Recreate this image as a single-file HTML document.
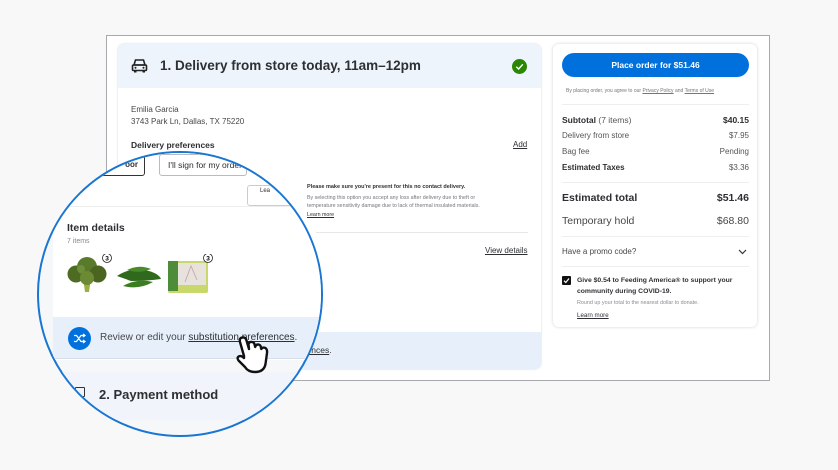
<!DOCTYPE html>
<html><head><meta charset="utf-8"><style>
*{box-sizing:border-box;margin:0;padding:0}
body{width:838px;height:470px;background:#f8f8f9;font-family:"Liberation Sans",sans-serif;color:#2e2f32;position:relative;overflow:hidden}
.abs{position:absolute}
.frame{left:106px;top:35px;width:664px;height:346px;background:#fff;border:1px solid #a9a9ad}
.card{left:118px;top:44px;width:423px;height:325px;background:#fff;border-radius:6px;box-shadow:0 0 2px rgba(0,0,0,.18);overflow:hidden}
.rcard{left:553px;top:44px;width:204px;height:283px;background:#fff;border-radius:6px;box-shadow:0 0 3px rgba(0,0,0,.18)}
.t{position:absolute;white-space:nowrap}
u{text-decoration:underline}
.circle{left:37px;top:151px;width:286px;height:286px;border-radius:50%;border:2px solid #1976d2;overflow:hidden;background:#f6f7f9}
</style></head><body>
<div class="abs frame"></div>
<div class="abs card">
 <div class="abs" style="left:0;top:0;width:423px;height:44px;background:#eef4fb"></div>
 <svg class="abs" style="left:13px;top:14px" width="17" height="16" viewBox="0 0 17 16"><path d="M3 7 L4.5 2 H12.5 L14 7 Z" fill="none" stroke="#222" stroke-width="1.6"/><rect x="1.5" y="7" width="14" height="5.5" rx="1" fill="none" stroke="#222" stroke-width="1.6"/><rect x="3" y="12" width="2.5" height="2.5" fill="#222"/><rect x="11.5" y="12" width="2.5" height="2.5" fill="#222"/><circle cx="4.5" cy="9.7" r="1" fill="#222"/><circle cx="12.5" cy="9.7" r="1" fill="#222"/></svg>
 <div class="t" style="left:42px;top:14px;font-size:13.5px;font-weight:bold;color:#2e2f32">1. Delivery from store today, 11am–12pm</div>
 <svg class="abs" style="left:394px;top:15px" width="15" height="15"><circle cx="7.5" cy="7.5" r="7.5" fill="#2a8703"/><path d="M4.3 7.7 L6.6 10 L10.8 5.3" stroke="#fff" stroke-width="1.4" fill="none"/></svg>
 <div class="t" style="left:13px;top:61px;font-size:8px;color:#46474a">Emilia Garcia</div>
 <div class="t" style="left:13px;top:73px;font-size:8px;color:#46474a">3743 Park Ln, Dallas, TX 75220</div>
 <div class="t" style="left:13px;top:96px;font-size:8.5px;font-weight:bold">Delivery preferences</div>
 <div class="t" style="left:395px;top:96px;font-size:8px"><u>Add</u></div>
 <div class="t" style="left:189px;top:140px;font-size:5.5px;font-weight:bold">Please make sure you're present for this no contact delivery.</div>
 <div class="t" style="left:189px;top:150px;font-size:5.3px;color:#74767c;line-height:8.3px">By selecting this option you accept any loss after delivery due to theft or<br>temperature sensitivity damage due to lack of thermal insulated materials.<br><u style="color:#2e2f32">Learn more</u></div>
 <div class="abs" style="left:198px;top:188px;width:212px;height:1px;background:#e6e7e8"></div>
 <div class="t" style="left:367px;top:202px;font-size:8px"><u>View details</u></div>
 <div class="abs" style="left:0;top:288px;width:423px;height:37px;background:#e7f0fa"></div>
 <div class="t" style="left:181px;top:301px;font-size:8.5px"><u>erences</u>.</div>
</div>
<div class="abs rcard">
 <div class="abs" style="left:9px;top:9px;width:187px;height:24px;border-radius:12px;background:#0071dc;color:#fff;font-size:8.5px;font-weight:bold;text-align:center;line-height:24px">Place order for $51.46</div>
 <div class="t" style="left:13px;top:44px;font-size:5px;color:#74767c">By placing order, you agree to our <u>Privacy Policy</u> and <u>Terms of Use</u></div>
 <div class="abs" style="left:9px;top:60px;width:187px;height:1px;background:#eee"></div>
 <div class="t" style="left:9px;top:71px;font-size:8.5px"><b>Subtotal</b> <span style="color:#555">(7 items)</span></div><div class="t" style="right:8px;top:71px;font-size:8.5px;font-weight:bold">$40.15</div>
 <div class="t" style="left:9px;top:87px;font-size:8px;color:#555">Delivery from store</div><div class="t" style="right:8px;top:87px;font-size:8px;color:#555">$7.95</div>
 <div class="t" style="left:9px;top:103px;font-size:8px;color:#555">Bag fee</div><div class="t" style="right:8px;top:103px;font-size:8px;color:#555">Pending</div>
 <div class="t" style="left:9px;top:119px;font-size:8px;font-weight:bold">Estimated Taxes</div><div class="t" style="right:8px;top:119px;font-size:8px;color:#555">$3.36</div>
 <div class="abs" style="left:9px;top:138px;width:187px;height:1px;background:#eee"></div>
 <div class="t" style="left:9px;top:148px;font-size:10.5px;font-weight:bold">Estimated total</div><div class="t" style="right:8px;top:148px;font-size:10.5px;font-weight:bold">$51.46</div>
 <div class="t" style="left:9px;top:171px;font-size:10.5px;color:#46474a">Temporary hold</div><div class="t" style="right:8px;top:171px;font-size:10.5px;color:#46474a">$68.80</div>
 <div class="abs" style="left:9px;top:192px;width:187px;height:1px;background:#eee"></div>
 <div class="t" style="left:9px;top:203px;font-size:8px;color:#46474a">Have a promo code?</div>
 <svg class="abs" style="left:185px;top:205px" width="9" height="6"><path d="M1 1 L4.5 4.5 L8 1" stroke="#333" fill="none" stroke-width="1.2"/></svg>
 <div class="abs" style="left:9px;top:222px;width:187px;height:1px;background:#eee"></div>
 <div class="abs" style="left:9px;top:232px;width:9px;height:9px;background:#111;border-radius:1px"></div>
 <svg class="abs" style="left:9px;top:232px" width="9" height="9"><path d="M2 4.7 L3.8 6.5 L7 2.5" stroke="#fff" stroke-width="1.2" fill="none"/></svg>
 <div class="t" style="left:24px;top:232px;font-size:6.8px;font-weight:bold;line-height:10.5px">Give $0.54 to Feeding America® to support your<br>community during COVID-19.</div>
 <div class="t" style="left:24px;top:256px;font-size:5.4px;color:#8a8c90">Round up your total to the nearest dollar to donate.</div>
 <div class="t" style="left:24px;top:268px;font-size:6.2px"><u>Learn more</u></div>
</div>

<div class="abs circle">
 <div class="abs" style="left:14px;top:-10px;width:300px;height:217px;background:#fff"></div>
 <div class="abs" style="left:14px;top:219px;width:300px;height:48px;background:#f1f5fb"></div>
 <div class="abs" style="left:30px;top:1px;width:76px;height:22px;border:1.5px solid #333;border-radius:3px;font-size:8px;font-weight:bold;line-height:19px;text-align:right;padding-right:6px">oor</div>
 <div class="abs" style="left:120px;top:1px;width:88px;height:22px;border:1px solid #bbb;border-radius:3px;font-size:8.5px;line-height:20px;padding-left:8px;white-space:nowrap;overflow:hidden">I'll sign for my order</div>
 <div class="abs" style="left:208px;top:32px;width:48px;height:21px;border:1px solid #ccc;border-radius:3px;font-size:6px;padding-left:12px;padding-top:2px">Lea</div>
 <div class="abs" style="left:14px;top:53px;width:280px;height:1px;background:#eee"></div>
 <div class="t" style="left:28px;top:69px;font-size:10.5px;font-weight:bold">Item details</div>
 <div class="t" style="left:28px;top:85px;font-size:7px;color:#888">7 items</div>
 <svg class="abs" style="left:28px;top:101px" width="150" height="44" viewBox="0 0 150 44">
  <path d="M16 24 L24 24 L22 38 L18 38 Z" fill="#9dae45"/>
  <circle cx="9" cy="20" r="8.5" fill="#4e6b23"/><circle cx="20" cy="13" r="10" fill="#587a2a"/><circle cx="31" cy="20" r="8.5" fill="#4a6520"/><circle cx="20" cy="24" r="7" fill="#6b8a33"/><circle cx="14" cy="15" r="4" fill="#6e8f3a"/>
  <circle cx="40" cy="4" r="4.5" fill="#fff" stroke="#222" stroke-width=".8"/><text x="40" y="6.5" font-size="6.5" text-anchor="middle" font-family="Liberation Sans" font-weight="bold">3</text>
  <path d="M50 22 Q65 12 82 17 Q92 20 94 25 Q80 27 64 27 Z" fill="#2f6a1c"/><path d="M56 32 Q70 24 86 28 Q72 36 56 32Z" fill="#3b7d22"/><path d="M60 16 Q72 10 84 15 Q72 20 60 16Z" fill="#4a8a2a"/>
  <rect x="101" y="7" width="40" height="32" rx="2" fill="#c8d86a"/><rect x="110" y="9" width="29" height="22" fill="#e7e2dc"/><rect x="101" y="7" width="10" height="30" fill="#4e8c3a"/><path d="M118 28 L124 12 L130 26" stroke="#c9a0a0" fill="none" stroke-width=".8"/>
  <circle cx="141" cy="4" r="4.5" fill="#fff" stroke="#222" stroke-width=".8"/><text x="141" y="6.5" font-size="6.5" text-anchor="middle" font-family="Liberation Sans" font-weight="bold">3</text>
 </svg>
 <div class="abs" style="left:14px;top:164px;width:300px;height:42px;background:#e7f0fa;border-bottom:1px solid #d6dde6"></div>
 <svg class="abs" style="left:29px;top:174px" width="23" height="23"><circle cx="11.5" cy="11.5" r="11.5" fill="#0071dc"/><path d="M6 8.5 H8.5 L13 14.5 H16.5 M6 14.5 H8.5 L13 8.5 H16.5 M15 7 L17 8.5 L15 10 M15 13 L17 14.5 L15 16" stroke="#fff" stroke-width="1.2" fill="none"/></svg>
 <div class="t" style="left:61px;top:179px;font-size:10px;color:#46474a">Review or edit your <u style="color:#2e2f32">substitution preferences</u>.</div>
 <svg class="abs" style="left:196px;top:182px" width="36" height="40" viewBox="0 0 36 40"><path d="M9 21 L5 7 Q4 3 7.5 2.5 Q10.5 2 11.5 5.5 L14 14 L13.5 9.5 Q14 6.5 17 7 Q19.5 7.5 19.8 10.5 L20.2 12 Q21 9 23.8 9.6 Q26 10.3 26 13 L26.3 14 Q27.5 12 30 12.8 Q32.5 14 32 18 L30.5 29 Q29 37 20 37 Q13 37 10 32 L3.5 25.5 Q1.5 22.5 4 21.3 Q6.5 20.3 9 23 Z" fill="#fff" stroke="#111" stroke-width="2.4" stroke-linejoin="round"/></svg>
 <div class="abs" style="left:36px;top:234px;width:10px;height:10px;border:1.8px solid #333;border-radius:1px"></div>
 <div class="t" style="left:60px;top:234px;font-size:13px;font-weight:bold">2. Payment method</div>
</div>
</body></html>
